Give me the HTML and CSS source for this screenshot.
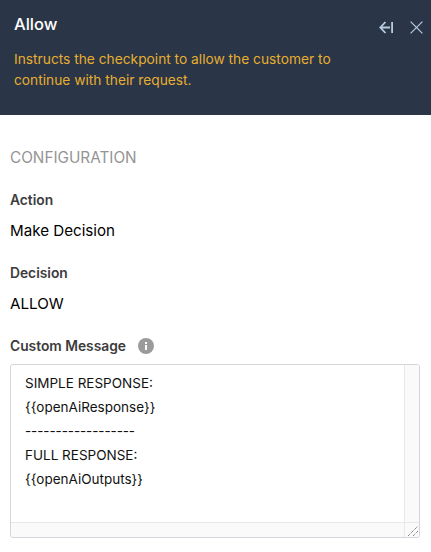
FILE: index.html
```html
<!DOCTYPE html>
<html lang="en">
<head>
<meta charset="utf-8">
<title>Allow</title>
<link rel="stylesheet" href="styles.css">
</head>
<body>
<header class="head">
  <div class="head-top">
    <h1 class="title">Allow</h1>
    <div class="head-icons">
      <svg class="icon" width="14" height="13" viewBox="0 0 14 13" fill="none" stroke="#b9cbe0" stroke-width="1.8"><path d="M6.500 1 1.300 6.500 6.500 12M1.300 6.500H11"/><path d="M13.100 1V12"/></svg>
      <svg class="icon" width="13" height="13" viewBox="0 0 13 13" fill="none" stroke="#b9cbe0" stroke-width="1.2"><path d="M.6.6 12.400 12.400M12.400.6.6 12.400"/></svg>
    </div>
  </div>
  <p class="sub">Instructs the checkpoint to allow the customer to continue with their request.</p>
</header>
<main class="body">
  <h2 class="section">CONFIGURATION</h2>
  <div class="field">
    <div class="label">Action</div>
    <div class="value">Make Decision</div>
  </div>
  <div class="field">
    <div class="label">Decision</div>
    <div class="value">ALLOW</div>
  </div>
  <div class="label label-row">Custom Message
    <svg width="16" height="16" viewBox="0 0 16 16"><circle cx="8" cy="8" r="8" fill="#9b9b9b"/><rect x="7" y="7" width="2" height="5" fill="#fff"/><rect x="7" y="4" width="2" height="2" fill="#fff"/></svg>
  </div>
  <div class="area">
    <div class="area-main">
      <div class="area-text">
        <div>SIMPLE RESPONSE:</div>
        <div>{{openAiResponse}}</div>
        <div class="dashes">------------------</div>
        <div>FULL RESPONSE:</div>
        <div>{{openAiOutputs}}</div>
      </div>
      <div class="track-v"></div>
    </div>
    <div class="area-foot">
      <div class="track-h"></div>
      <div class="corner">
        <svg width="14" height="14" viewBox="0 0 14 14" fill="none" stroke="#555" stroke-width="1" stroke-dasharray="1 1"><path d="M3 13 13 3M8 13 13 8"/></svg>
      </div>
    </div>
  </div>
</main>
</body>
</html>
```
FILE: styles.css
```css
* { box-sizing: border-box; }
html, body { margin: 0; padding: 0; }
body {
  width: 431px;
  height: 552px;
  overflow: hidden;
  background: #fff;
  font-family: Inter, "Liberation Sans", sans-serif;
  color: #000;
}
.head {
  height: 115px;
  background: #2a3547;
  padding: 14px 14px 0;
}
.head-top {
  display: flex;
  justify-content: space-between;
  align-items: flex-start;
}
.title {
  margin: 0;
  font-size: 16.5px;
  line-height: 20px;
  font-weight: 450;
  color: #fff;
}
.head-icons {
  display: flex;
  gap: 17px;
  margin: 7px -6px 0 0;
}
.icon { display: block; }
.sub {
  margin: 15px 0 0;
  width: 340px;
  font-size: 13.75px;
  line-height: 21px;
  color: #e6ae30;
}
.body { padding: 34px 11px 0 10px; }
.section {
  margin: 0;
  font-size: 15.3px;
  line-height: 18px;
  font-weight: 400;
  color: #949494;
}
.field { margin-top: 24px; }
.field + .field { margin-top: 23px; }
.label {
  font-size: 13.8px;
  line-height: 18px;
  font-weight: 600;
  color: #3c3c3c;
}
.value {
  margin-top: 12px;
  font-size: 15.15px;
  line-height: 20px;
  color: #000;
}
.label-row {
  margin-top: 23px;
  display: flex;
  align-items: center;
  gap: 12px;
}
.area {
  margin-top: 9px;
  height: 174px;
  border: 1px solid #d5d5dc;
  border-radius: 3px;
  display: flex;
  flex-direction: column;
  overflow: hidden;
}
.area-main { flex: 1; display: flex; min-height: 0; }
.area-text {
  flex: 1;
  padding: 6px 14px;
  font-size: 13.5px;
  line-height: 24px;
  color: #111;
}
.dashes { letter-spacing: -0.1px; }
.track-v {
  width: 15px;
  background: #fafafa;
  border-left: 1px solid #e8e8e8;
}
.area-foot { height: 15px; display: flex; border-top: 1px solid #e8e8e8; }
.track-h { flex: 1; background: #fafafa; }
.corner {
  width: 15px;
  background: #fafafa;
  border-left: 1px solid #e8e8e8;
}
.corner svg { display: block; }
```
